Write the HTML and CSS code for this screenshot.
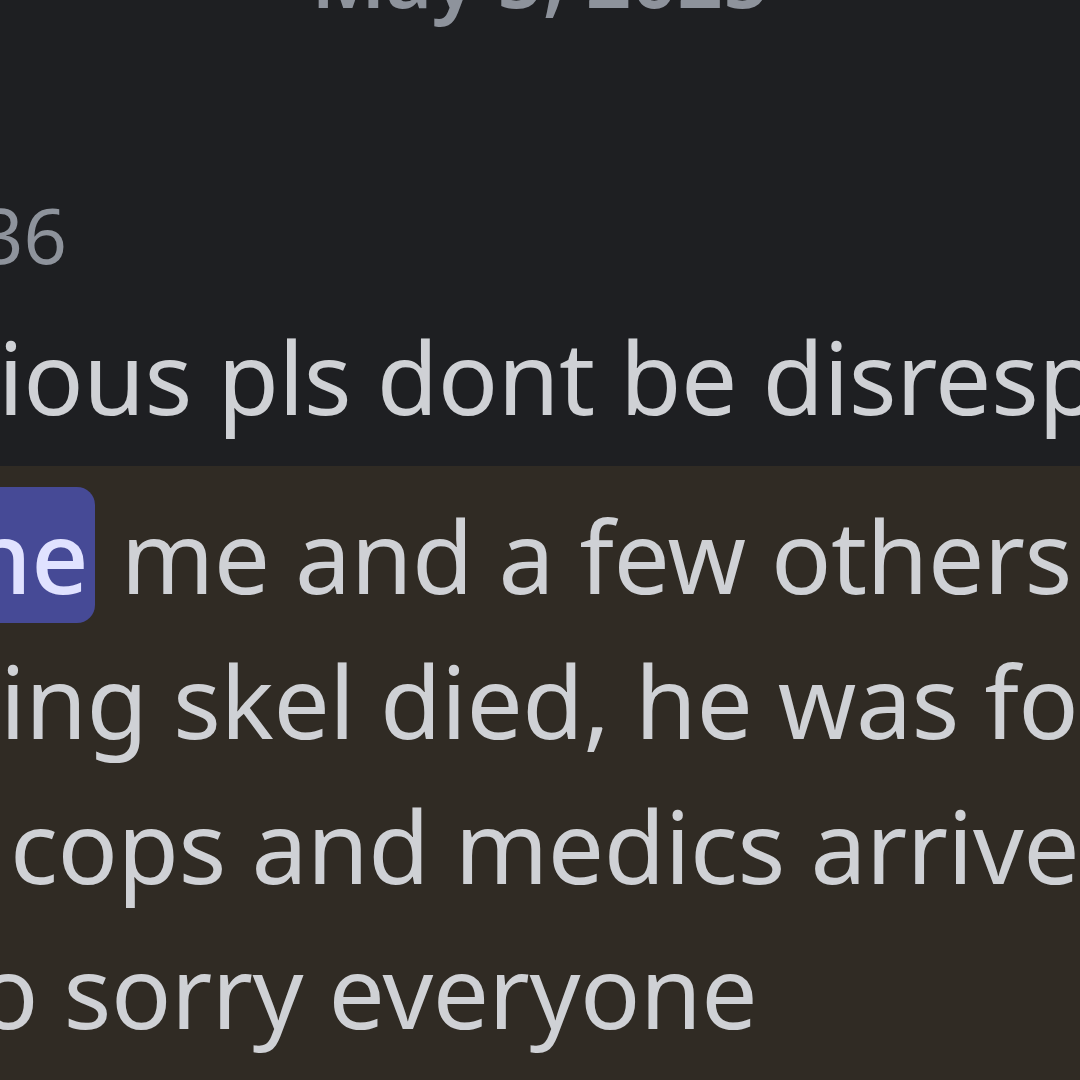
FILE: index.html
```html
<!DOCTYPE html>
<html lang="en">
<head>
  <meta charset="UTF-8">
  <meta name="viewport" content="width=device-width, initial-scale=1.0">
  <title>Chat</title>
  <link rel="stylesheet" href="styles.css">
</head>
<body>
  <div class="chat">
    <!-- date separator -->
    <div class="divider">May 5, 2025</div>

    <!-- previous message -->
    <div class="message">
      <div class="meta">36</div>
      <div class="line line-1">ious pls dont be disrespectful</div>
    </div>

    <!-- message that pings everyone -->
    <div class="message mentioned">
      <div class="line line-2"><span class="mention">@everyone</span> me and a few others were there</div>
      <div class="line line-3">ing skel died, he was found</div>
      <div class="line line-4">cops and medics arrived</div>
      <div class="line line-5">o sorry everyone</div>
    </div>
  </div>
</body>
</html>
```

FILE: styles.css
```css
* {
  box-sizing: border-box;
  margin: 0;
  padding: 0;
}
body {
  background: #1e1f22;
  font-family: "Noto Sans", "Open Sans", sans-serif;
  color: #cfd1d5;
  overflow: hidden;
}
.chat {
  width: 1080px;
  height: 1080px;
  overflow: hidden;
}
.divider {
  text-align: center;
  font-size: 80px;
  font-weight: 600;
  line-height: 100px;
  color: #8e939c;
  margin-top: -73px;
}
.message {
  margin-top: 158px;
}
.meta {
  font-size: 76px;
  line-height: 100px;
  color: #8e939c;
  margin-left: -20px;
  margin-bottom: 19px;
}
.line {
  font-size: 100px;
  line-height: 145px;
  white-space: nowrap;
  font-weight: 380;
  letter-spacing: -0.5px;
}
.mentioned {
  margin-top: 17px;
  padding-top: 17px;
  padding-bottom: 40px;
  background: #302b24;
}
.mention {
  background: #464a96;
  color: #e0e2ff;
  font-weight: 500;
  padding: 0 7px;
  border-radius: 18px;
}
.line-1 { text-indent: -2px; }
.line-2 { text-indent: -446px; }
.line-3 { text-indent: 0; }
.line-4 { text-indent: 10px; }
.line-5 { text-indent: -22px; }
```
